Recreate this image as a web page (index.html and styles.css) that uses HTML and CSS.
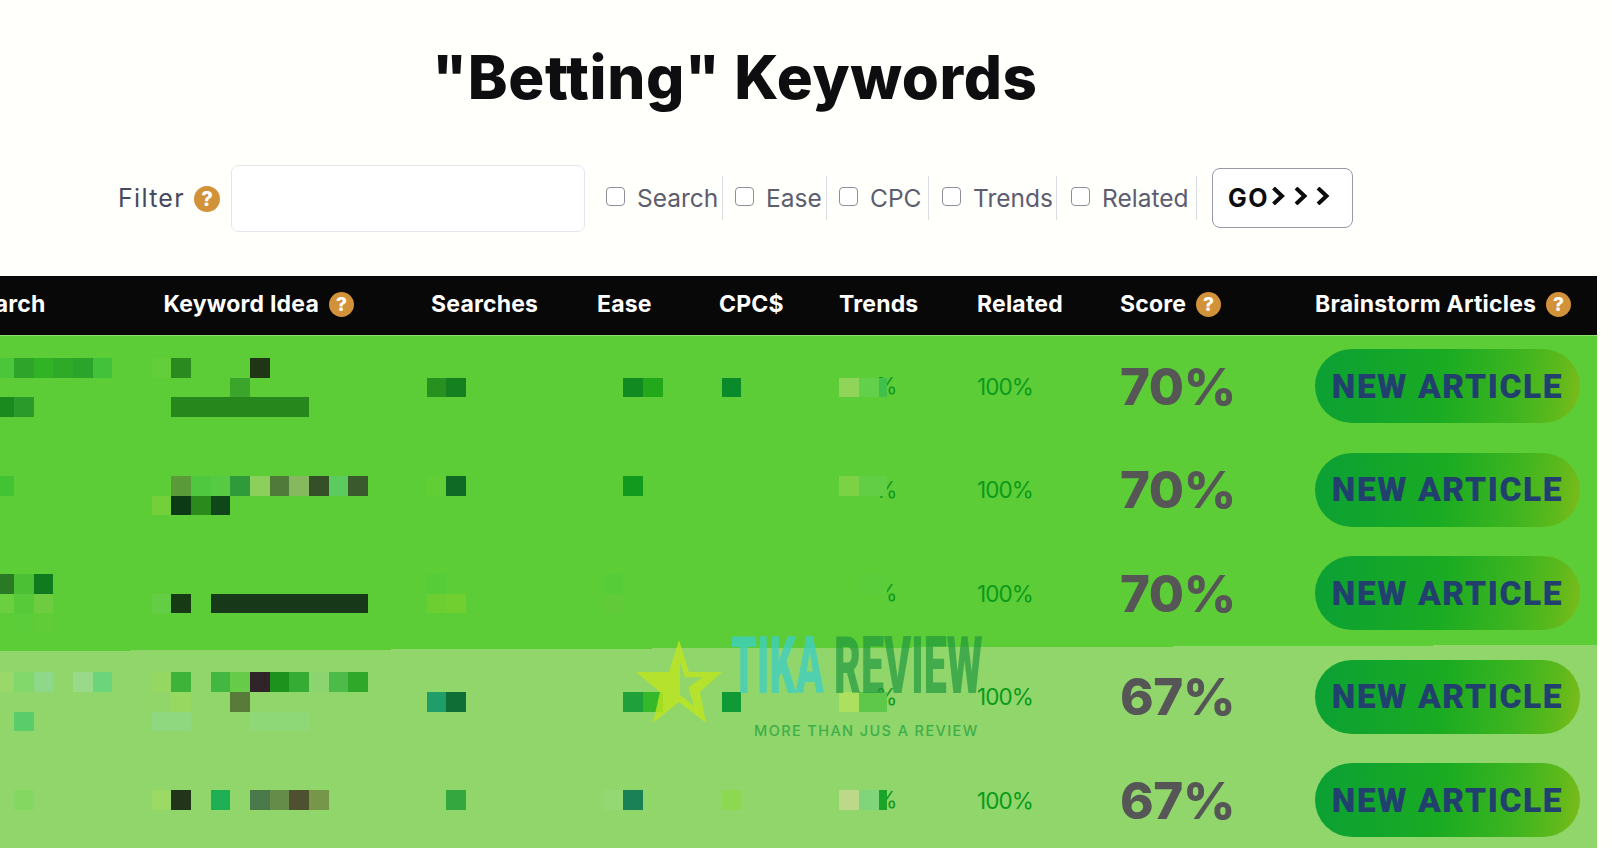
FILE: index.html
```html
<!DOCTYPE html>
<html lang="en">
<head>
<meta charset="utf-8">
<title>"Betting" Keywords</title>
<link rel="stylesheet" href="styles.css">
</head>
<body>
<main class="page">
  <h1 class="title">"Betting" Keywords</h1>
  <form class="toolbar">
    <span class="filter-label">Filter</span>
    <span class="help help-lg">?</span>
    <input class="filter-input" type="text" aria-label="Filter">
    <div class="checks">
      <label class="check check-search"><input type="checkbox"><span>Search</span></label>
      <label class="check check-ease"><input type="checkbox"><span>Ease</span></label>
      <label class="check check-cpc"><input type="checkbox"><span>CPC</span></label>
      <label class="check check-trends"><input type="checkbox"><span>Trends</span></label>
      <label class="check check-related"><input type="checkbox"><span>Related</span></label>
    </div>
    <button class="go" type="button">GO<svg class="chevrons" viewBox="0 0 58 18" width="58" height="18"><path d="M1.5 1l8.5 8-8.5 8M24 1l8.5 8-8.5 8M46 1l8.5 8-8.5 8"/></svg></button>
  </form>
  <section class="table">
    <div class="row head">
      <div class="cell first">Search</div>
      <div class="cell">Keyword Idea<span class="help">?</span></div>
      <div class="cell">Searches</div>
      <div class="cell">Ease</div>
      <div class="cell">CPC$</div>
      <div class="cell">Trends</div>
      <div class="cell">Related</div>
      <div class="cell">Score<span class="help">?</span></div>
      <div class="cell">Brainstorm Articles<span class="help">?</span></div>
    </div>
    <div class="rows">
      <div class="row item">
        <div class="cell"></div><div class="cell"></div><div class="cell"></div><div class="cell"></div><div class="cell"></div>
        <div class="cell trend">%</div><div class="cell related">100%</div><div class="cell score">70%</div>
        <div class="cell"><a class="new">NEW ARTICLE</a></div>
      </div>
      <div class="row item">
        <div class="cell"></div><div class="cell"></div><div class="cell"></div><div class="cell"></div><div class="cell"></div>
        <div class="cell trend">%</div><div class="cell related">100%</div><div class="cell score">70%</div>
        <div class="cell"><a class="new">NEW ARTICLE</a></div>
      </div>
      <div class="row item">
        <div class="cell"></div><div class="cell"></div><div class="cell"></div><div class="cell"></div><div class="cell"></div>
        <div class="cell trend">%</div><div class="cell related">100%</div><div class="cell score">70%</div>
        <div class="cell"><a class="new">NEW ARTICLE</a></div>
      </div>
      <div class="row item">
        <div class="cell"></div><div class="cell"></div><div class="cell"></div><div class="cell"></div><div class="cell"></div>
        <div class="cell trend">%</div><div class="cell related">100%</div><div class="cell score">67%</div>
        <div class="cell"><a class="new">NEW ARTICLE</a></div>
      </div>
      <div class="row item">
        <div class="cell"></div><div class="cell"></div><div class="cell"></div><div class="cell"></div><div class="cell"></div>
        <div class="cell trend">%</div><div class="cell related">100%</div><div class="cell score">67%</div>
        <div class="cell"><a class="new">NEW ARTICLE</a></div>
      </div>
      <svg class="mosaic" width="1597" height="520" viewBox="0 0 1597 520" shape-rendering="crispEdges">
        <g transform="translate(-5.5 22) scale(19.65 19.65)">
          <!-- row 1 -->
          <rect x="0" y="0" width="1" height="1" fill="#4bc63a"/><rect x="1" y="0" width="1" height="1" fill="#2ea52a"/><rect x="2" y="0" width="1" height="1" fill="#30b325"/><rect x="3" y="0" width="1" height="1" fill="#2faa28"/><rect x="4" y="0" width="1" height="1" fill="#2aa42a"/><rect x="5" y="0" width="1" height="1" fill="#42c23a"/>
          <rect x="8" y="0" width="1" height="1" fill="#62ce3a"/><rect x="9" y="0" width="1" height="1" fill="#2a8a1f"/><rect x="13" y="0" width="1" height="1" fill="#1f3514"/>
          <rect x="12" y="1" width="1" height="1" fill="#3aa52a"/><rect x="22" y="1" width="1" height="1" fill="#27901f"/><rect x="23" y="1" width="1" height="1" fill="#15801f"/><rect x="32" y="1" width="1" height="1" fill="#128a22"/><rect x="33" y="1" width="1" height="1" fill="#22a81a"/><rect x="37" y="1" width="1" height="1" fill="#0a8a2a"/>
          <rect x="43" y="1" width="1" height="1" fill="#90d45a"/><rect x="44" y="1" width="1" height="1" fill="#62d04a"/><rect x="45" y="1" width=".4" height="1" fill="#3fc04a"/>
          <rect x="0" y="2" width="1" height="1" fill="#1a8a1f"/><rect x="1" y="2" width="1" height="1" fill="#2a9a2a"/><rect x="9" y="2" width="7" height="1" fill="#25871c"/>
          <!-- row 2 -->
          <rect x="0" y="6" width="1" height="1" fill="#41c334"/><rect x="9" y="6" width="1" height="1" fill="#5a9a38"/><rect x="10" y="6" width="1" height="1" fill="#4fc73e"/><rect x="11" y="6" width="1" height="1" fill="#55ca42"/><rect x="12" y="6" width="1" height="1" fill="#2e9a3a"/><rect x="13" y="6" width="1" height="1" fill="#8ccf5a"/><rect x="14" y="6" width="1" height="1" fill="#4f7a3a"/><rect x="15" y="6" width="1" height="1" fill="#85b85f"/><rect x="16" y="6" width="1" height="1" fill="#354f28"/><rect x="17" y="6" width="1" height="1" fill="#5ccb5f"/><rect x="18" y="6" width="1" height="1" fill="#3a5a2e"/>
          <rect x="22" y="6" width="1" height="1" fill="#62ce35"/><rect x="23" y="6" width="1" height="1" fill="#0e6a25"/><rect x="32" y="6" width="1" height="1" fill="#129a1e"/>
          <rect x="43" y="6" width="1" height="1" fill="#7cd145"/><rect x="44" y="6" width="1.4" height="1" fill="#62ce45"/>
          <rect x="8" y="7" width="1" height="1" fill="#74d03a"/><rect x="9" y="7" width="1" height="1" fill="#0c3a14"/><rect x="10" y="7" width="1" height="1" fill="#2a8a1c"/><rect x="11" y="7" width="1" height="1" fill="#10471a"/>
          <!-- row 3 -->
          <rect x="0" y="11" width="1" height="1" fill="#2a7a25"/><rect x="1" y="11" width="1" height="1" fill="#4cc035"/><rect x="2" y="11" width="1" height="1" fill="#107a1e"/><rect x="22" y="11" width="1" height="1" fill="#55cc38"/><rect x="31" y="11" width="1" height="1" fill="#55cc38"/>
          <rect x="0" y="12" width="1" height="1" fill="#6ad040"/><rect x="1" y="12" width="1" height="1" fill="#56ca38"/><rect x="2" y="12" width="1" height="1" fill="#6dcc40"/><rect x="8" y="12" width="1" height="1" fill="#63cd45"/><rect x="9" y="12" width="1" height="1" fill="#163a14"/><rect x="11" y="12" width="8" height="1" fill="#18381a"/><rect x="22" y="12" width="1" height="1" fill="#6cce30"/><rect x="23" y="12" width="1" height="1" fill="#72cf30"/><rect x="31" y="12" width="1" height="1" fill="#60ca38"/>
          <rect x="1" y="13" width="1" height="1" fill="#5ccd3a"/><rect x="2" y="13" width="1" height="1" fill="#60cc38"/>
          <rect x="44" y="11" width="1.4" height="1" fill="#5ccd3a"/><rect x="44" y="12" width="1.4" height="1" fill="#5dcd37"/>
          <!-- row 4 -->
          <rect x="0" y="16" width="1" height="1" fill="#9bd86a"/><rect x="1" y="16" width="1" height="1" fill="#82d86a"/><rect x="2" y="16" width="1" height="1" fill="#8fd88a"/><rect x="4" y="16" width="1" height="1" fill="#9ad88a"/><rect x="5" y="16" width="1" height="1" fill="#6cd47a"/>
          <rect x="8" y="16" width="1" height="1" fill="#96d762"/><rect x="9" y="16" width="1" height="1" fill="#3db33a"/><rect x="11" y="16" width="1" height="1" fill="#42b843"/><rect x="12" y="16" width="1" height="1" fill="#66cb48"/><rect x="13" y="16" width="1" height="1" fill="#30242a"/><rect x="14" y="16" width="1" height="1" fill="#1d931d"/><rect x="15" y="16" width="1" height="1" fill="#35ad35"/><rect x="16" y="16" width="1" height="1" fill="#8bd470"/><rect x="17" y="16" width="1" height="1" fill="#4dbb48"/><rect x="18" y="16" width="1" height="1" fill="#2fa82a"/>
          <rect x="8" y="17" width="1" height="1" fill="#90d668"/><rect x="9" y="17" width="1" height="1" fill="#96d860"/><rect x="12" y="17" width="1" height="1" fill="#5a7a3a"/><rect x="22" y="17" width="1" height="1" fill="#1f9e6a"/><rect x="23" y="17" width="1" height="1" fill="#0f6e35"/><rect x="32" y="17" width="1" height="1" fill="#1fa03a"/><rect x="33" y="17" width="1" height="1" fill="#35b82a"/><rect x="37" y="17" width="1" height="1" fill="#0f9a35"/><rect x="43" y="17" width="1" height="1" fill="#aee060"/><rect x="44" y="17" width="1.4" height="1" fill="#5ec84a"/>
          <rect x="1" y="18" width="1" height="1" fill="#5acc6a"/><rect x="8" y="18" width="2" height="1" fill="#8fd880"/><rect x="13" y="18" width="3" height="1" fill="#8fd878"/>
          <!-- row 5 -->
          <rect x="1" y="22" width="1" height="1" fill="#84d862"/><rect x="8" y="22" width="1" height="1" fill="#9cda66"/><rect x="9" y="22" width="1" height="1" fill="#22351a"/><rect x="11" y="22" width="1" height="1" fill="#1fb055"/><rect x="13" y="22" width="1" height="1" fill="#4a7a4a"/><rect x="14" y="22" width="1" height="1" fill="#668c4a"/><rect x="15" y="22" width="1" height="1" fill="#4f5030"/><rect x="16" y="22" width="1" height="1" fill="#76964a"/>
          <rect x="23" y="22" width="1" height="1" fill="#34a83e"/><rect x="31" y="22" width="1" height="1" fill="#93d872"/><rect x="32" y="22" width="1" height="1" fill="#1a8055"/><rect x="37" y="22" width="1" height="1" fill="#8cd850"/><rect x="43" y="22" width="1" height="1" fill="#bcd888"/><rect x="44" y="22" width="1" height="1" fill="#80d47a"/><rect x="45" y="22" width=".4" height="1" fill="#1aa52a"/>
        </g>
      </svg>
    </div>
  </section>
  <aside class="watermark">
    <svg class="star" viewBox="0 0 86 83" width="86" height="83"><path class="star-fill" fill-rule="evenodd" d="M43 0L53 32H86L64 52L70 83L43 62L17 83L24 52L0 32H33ZM44 21.7V55L58 66L52.3 47.3L66.7 37.3H49Z"/></svg>
    <div class="mark-text">
      <div class="mark-name"><span class="mark-tika">TIKA</span> <span class="mark-review">REVIEW</span></div>
      <div class="mark-tag">MORE THAN JUS A REVIEW</div>
    </div>
  </aside>
</main>
</body>
</html>
```
FILE: styles.css
```css
* { box-sizing: border-box; }
html, body { margin: 0; height: 848px; overflow: hidden; background: #fffffb; }
body { font-family: Inter, "Open Sans", sans-serif; }
.page { position: relative; width: 1612px; height: 848px; overflow: hidden; }

.title {
  margin: 0;
  height: 165px;
  padding: 37px 0 0 432px;
  font-size: 60px;
  line-height: 80px;
  font-weight: 800;
  color: #0e0e10;
  letter-spacing: .6px;
  white-space: nowrap;
}

.toolbar { display: flex; align-items: center; height: 67px; padding-left: 118px; }
.filter-label { font-size: 25px; color: #46495f; letter-spacing: 1.3px; width: 76px; margin-top: -2px; }
.help {
  display: inline-flex; align-items: center; justify-content: center;
  width: 25px; height: 25px; margin-left: 10px; border-radius: 50%;
  background: #d2923a; color: #fff; font-size: 19px; font-weight: 800;
  flex: none;
}
.help-lg { width: 26px; height: 26px; margin-left: 0; font-size: 20px; }
.filter-input {
  width: 354px; height: 67px; margin-left: 11px; flex: none;
  border: 1px solid #e9e5ef; border-radius: 7px; background: #fff;
}
.checks { display: flex; align-items: stretch; height: 44px; margin: -2px 0 0 21px; }
.check {
  display: flex; align-items: center; gap: 12px;
  border-right: 1px solid #dcdce4;
  font-size: 24.5px; color: #5d5d70; white-space: nowrap;
}
.check input {
  appearance: none; width: 19px; height: 19px; margin: 0 0 2px; flex: none;
  border: 1.5px solid #8f8f9c; border-radius: 4px; background: #fff;
}
.check-search { width: 117px; }
.check-ease { width: 104px; padding-left: 12px; }
.check-cpc { width: 102px; padding-left: 12px; }
.check-trends { width: 128px; padding-left: 13px; }
.check-related { width: 140px; padding-left: 14px; }

.go {
  display: flex; align-items: center; gap: 3px;
  width: 141px; height: 60px; margin: -2px 0 0 15px; padding: 0 0 0 15px;
  background: #fff; border: 1.5px solid #9a98a8; border-radius: 8px;
  font-family: inherit; font-size: 25px; font-weight: 700; letter-spacing: 1.5px; color: #0c0c0e;
}
.chevrons { fill: none; stroke: #0c0c0e; stroke-width: 4; margin-top: -3px; }

.table { width: 1597px; margin-top: 44px; }
.row {
  display: grid;
  grid-template-columns: 163.5px 267.5px 166px 122px 120px 138px 143px 195px 282px;
}
.cell { display: flex; align-items: center; min-width: 0; white-space: nowrap; }
.head {
  height: 60px; padding-bottom: 3px; background: #080808; color: #fff;
  font-size: 23px; font-weight: 700; letter-spacing: .2px;
  border-bottom: 1px solid #8fe070;
}
.first { justify-content: flex-end; padding-right: 118px; }

.rows {
  position: relative;
  background: linear-gradient(179.78deg, #5dcd37 0, #5dcd37 315px, #90d66a 315px);
}
.item { height: 103.6px; padding-bottom: 3.5px; }
.trend { padding-left: 36px; font-size: 23px; color: #149a22; }
.related { font-size: 22.5px; color: #0a9a1c; letter-spacing: -.9px; }
.score { font-size: 51px; font-weight: 800; color: #565656; letter-spacing: -.4px; }
.new {
  display: flex; align-items: center; justify-content: center;
  width: 265px; height: 74px; border-radius: 37px;
  background: linear-gradient(97deg, #0ba035 0, #1aab22 48%, #3fb51f 76%, #5cb91c 90%, #7fbb1a 100%);
  color: #22406e; font-family: Roboto, sans-serif; font-size: 33.5px; font-weight: 900; letter-spacing: 1.6px;
}
.mosaic { position: absolute; left: 0; top: 0; pointer-events: none; }

.watermark { position: absolute; left: 636px; top: 637px; display: flex; gap: 9px; pointer-events: none; }
.star { margin-top: 3px; flex: none; }
.star-fill { fill: rgba(190, 230, 30, .8); }
.mark-text { width: 270px; }
.mark-name {
  font-family: Roboto, sans-serif; font-size: 80px; line-height: 58px; font-weight: 900;
  white-space: nowrap; transform: scaleX(.515); transform-origin: 0 0;
  height: 58px;
}
.mark-tika { color: rgba(60, 205, 200, .75); }
.mark-review { color: rgba(30, 150, 60, .68); }
.mark-tag { margin: 30px 0 0 23px; font-size: 14.5px; font-weight: 500; line-height: 12px; letter-spacing: 1.4px; color: #3fae4a; white-space: nowrap; }
```
